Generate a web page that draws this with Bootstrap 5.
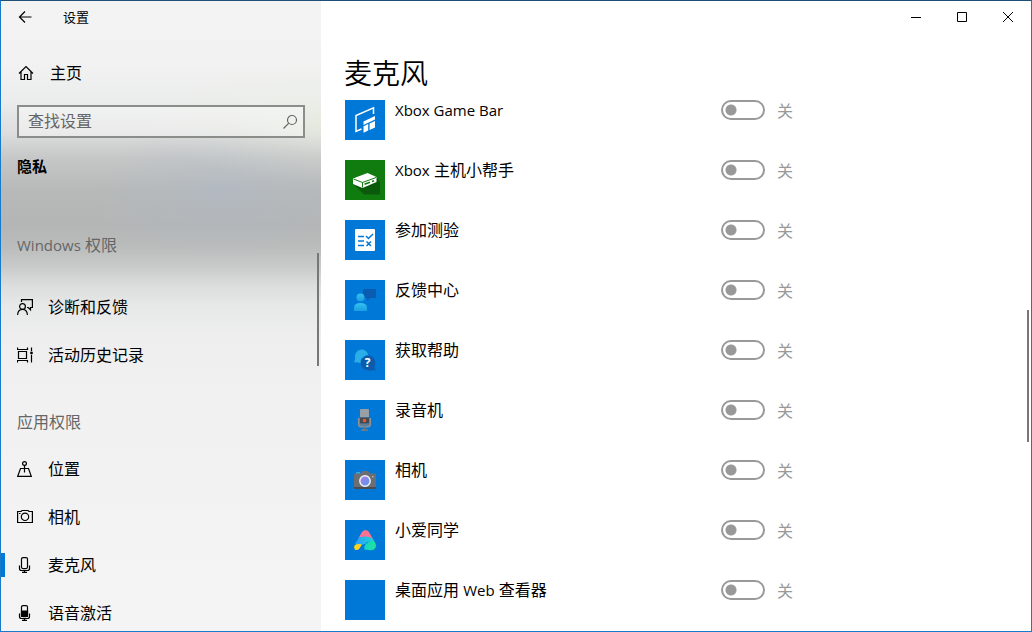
<!DOCTYPE html>
<html lang="zh-CN">
<head>
<meta charset="utf-8">
<meta name="viewport" content="width=device-width, initial-scale=1">
<title>设置</title>
<link href="https://cdn.jsdelivr.net/npm/bootstrap@5.3.0/dist/css/bootstrap.min.css" rel="stylesheet">
<style>
  :root { --accent: #0078d7; }
  body { font-family: "Open Sans", "Noto Sans CJK SC", sans-serif; font-size: 16px; line-height: 24px; color: #000; }
  .win { border: 1px solid #1979ca; border-top-color: #1f4e79; }
  a, a:hover { color: inherit; text-decoration: none; }
  svg { display: block; flex: none; }
  .line-icon { fill: none; stroke: #000; stroke-width: 1.2; }
  .thin { stroke-width: 1; }
  .latin { font-size: 15px; }

  /* Sidebar */
  .side {
    flex: 0 1 320px; min-width: 220px;
    background:
      radial-gradient(ellipse 130px 70px at 220px 190px, rgba(172,184,204,.4), rgba(172,184,204,.15) 55%, rgba(172,184,204,0)),
      radial-gradient(ellipse 180px 60px at 320px 120px, rgba(238,245,224,.45), rgba(238,245,224,.15) 55%, rgba(238,245,224,0)),
      linear-gradient(#f3f3f3 0, #f2f2f2 60px, #ebecec 100px, #dcdddc 132px, #c5c7c6 158px, #b7b9b8 190px, #b4b6b6 225px, #babcbb 245px, #c8caca 265px, #dcdddd 285px, #e7e8e8 305px, #eeeeee 335px, #f1f1f1 400px, #f4f4f4 100%);
  }
  .title-row { height: 32px; font-size: 13px; gap: 14px; }
  .back-btn { width: 48px; height: 32px; padding: 0; border: 0; border-radius: 0; }
  .home-link { height: 48px; margin-top: 16px; padding-left: 17px; gap: 16px; }
  .search-box { margin: 8px 16px 0; height: 33px; border: 2px solid #8b8d8b; background: rgba(255,255,255,.4); }
  .search-box input { border: 0; background: transparent; padding: 0 0 2px 9px; font-size: 16px; line-height: 24px; border-radius: 0; }
  .search-box input::placeholder { color: #666; opacity: 1; }
  .search-box .btn { padding: 0 5px; border: 0; }
  .search-box .line-icon { stroke: #666; }
  .page-name { margin: 16px 16px 0; font-size: 15px; line-height: 24px; font-weight: 700; }
  .group-name { margin: 0 16px; font-size: 16px; line-height: 24px; font-weight: 400; color: #666; }
  .group-a { margin-top: 55px; margin-bottom: 26px; }
  .group-b { margin-top: 31px; margin-bottom: 11px; }
  .side-link { height: 48px; padding: 0 16px; gap: 15px; }
  .side-link.active::before { content: ""; position: absolute; left: 0; top: 12px; width: 4px; height: 24px; background: var(--accent); }
  .thumb { position: absolute; width: 2px; background: #777; }
  .thumb-side { right: 2px; top: 40%; height: 18%; }
  .thumb-main { right: 2px; top: 49%; height: 21%; }

  /* Content */
  .win-btn { width: 46px; height: 32px; padding: 0; border: 0; border-radius: 0; }
  .main-title { margin: 22px 0 9px -1px; font-size: 28px; line-height: 36px; font-weight: 350; }
  .content-pad { padding-left: 24px; }
  .app-row { height: 60px; }
  .app-entry { flex: 0 1 376px; gap: 10px; }
  .app-entry label { line-height: 21px; }
  .tile { width: 40px; height: 40px; background: var(--accent); flex: none; }
  .tile-green { background: #107c10; }
  .toggle.form-check-input {
    width: 44px; height: 20px; margin: 0; flex: none; border: 2px solid #999; border-radius: 10px;
    background: radial-gradient(circle at 8px 8px, #999 5px, transparent 6px) #fff;
  }
  .state { margin-left: 12px; color: #999; line-height: 23px; }
</style>
</head>
<body>
<div class="win d-flex vh-100 overflow-hidden">
  <aside class="side position-relative overflow-hidden">
    <div class="title-row d-flex align-items-center">
      <button class="back-btn btn d-flex align-items-center justify-content-center" type="button" aria-label="返回">
        <svg class="line-icon" width="14" height="14" viewBox="0 0 14 14"><path d="M13.500 7H1.500M7 1.500L1.500 7L7 12.500"/></svg>
      </button>
      <span>设置</span>
    </div>
    <a href="#" class="home-link d-flex align-items-center">
      <svg class="line-icon" width="16" height="16" viewBox="0 0 16 16"><path d="M1 8.500L8 1.500L15 8.500M3 7V14.500H6.500V9.500H9.500V14.500H13V7"/></svg>
      <span>主页</span>
    </a>
    <form class="search-box d-flex align-items-center" role="search">
      <input class="form-control shadow-none" type="text" placeholder="查找设置" aria-label="查找设置">
      <button class="btn" type="button" aria-label="搜索">
        <svg class="line-icon" width="16" height="16" viewBox="0 0 16 16"><circle cx="10" cy="6" r="4.500"/><path d="M6.800 9.200L1.500 14.500"/></svg>
      </button>
    </form>
    <h2 class="page-name">隐私</h2>
    <h3 class="group-name group-a"><span class="latin">Windows</span> 权限</h3>
    <nav>
      <a href="#" class="side-link d-flex align-items-center">
        <svg class="line-icon" width="16" height="16" viewBox="0 0 16 16"><path d="M4.500 3V.6H15.400V8.500H13.500V10.800L11.200 8.500H10"/><circle cx="5.500" cy="7.500" r="2.900"/><path d="M.6 16C.8 12.500 2.800 10.400 5.500 10.400S10.200 12.500 10.400 16"/></svg>
        <span>诊断和反馈</span>
      </a>
      <a href="#" class="side-link d-flex align-items-center">
        <svg class="line-icon" width="16" height="16" viewBox="0 0 16 16"><path d="M.5 .5V2.500H10.500V.5M.5 15.500V13.500H10.500V15.500M1.500 5V11.500H9.500V4.500H1.500ZM14.500 .5V4M14.500 8V15.500"/><circle cx="14.500" cy="6" r="1.400" fill="#000" stroke="none"/></svg>
        <span>活动历史记录</span>
      </a>
    </nav>
    <h3 class="group-name group-b">应用权限</h3>
    <nav>
      <a href="#" class="side-link d-flex align-items-center">
        <svg class="line-icon" width="16" height="16" viewBox="0 0 16 16"><circle cx="7.500" cy="2.500" r="1.900"/><path d="M7.500 4.500V11.500M5.500 7.500H3.500L.7 15.400H14.300L11.500 7.500H9.500M5.500 7.500H9.500"/></svg>
        <span>位置</span>
      </a>
      <a href="#" class="side-link d-flex align-items-center">
        <svg class="line-icon" width="16" height="16" viewBox="0 0 16 16"><path d="M.6 2.500H4L5 1.500H11L12 2.500H15.400V13.500H.6Z"/><circle cx="8" cy="7.800" r="3.700"/><path d="M2 4.500H3.500"/></svg>
        <span>相机</span>
      </a>
      <a href="#" class="side-link active position-relative d-flex align-items-center" aria-current="page">
        <svg class="line-icon" width="16" height="16" viewBox="0 0 16 16"><rect x="4.500" y=".6" width="6" height="11" rx="1.500"/><path d="M2.500 8.500V11.500Q2.500 13.500 4.500 13.500H10.500Q12.500 13.500 12.500 11.500V8.500M7.500 13.500V15.500M5 15.400H10"/></svg>
        <span>麦克风</span>
      </a>
      <a href="#" class="side-link d-flex align-items-center">
        <svg class="line-icon" width="16" height="16" viewBox="0 0 16 16"><rect x="4.500" y=".6" width="6" height="11" rx="1.500"/><path d="M4.500 6H10.500V11.500H4.500Z" fill="#000"/><path d="M2.500 8.500V11.500Q2.500 13.500 4.500 13.500H10.500Q12.500 13.500 12.500 11.500V8.500M7.500 13.500V15.500M5 15.400H10"/></svg>
        <span>语音激活</span>
      </a>
    </nav>
    <div class="thumb thumb-side"></div>
  </aside>

  <main class="flex-grow-1 position-relative overflow-hidden bg-white">
    <div class="d-flex justify-content-end">
      <button class="win-btn btn d-flex align-items-center justify-content-center" type="button" aria-label="最小化">
        <svg class="line-icon thin" width="12" height="12" viewBox="0 0 12 12"><path d="M1 6.500H11"/></svg>
      </button>
      <button class="win-btn btn d-flex align-items-center justify-content-center" type="button" aria-label="最大化">
        <svg class="line-icon thin" width="12" height="12" viewBox="0 0 12 12"><path d="M1.500 1.500H10.500V10.500H1.500Z"/></svg>
      </button>
      <button class="win-btn btn d-flex align-items-center justify-content-center" type="button" aria-label="关闭">
        <svg class="line-icon thin" width="12" height="12" viewBox="0 0 12 12"><path d="M1 1L11 11M11 1L1 11"/></svg>
      </button>
    </div>
    <div class="content-pad">
      <h1 class="main-title">麦克风</h1>
      <div class="app-row d-flex">
        <div class="app-entry d-flex">
          <div class="tile"><svg width="40" height="40" viewBox="0 0 40 40"><path d="M28.500 14V7.800L11 15.600V31.400L16.500 29" fill="none" stroke="#fff" stroke-width="1.500"/><path d="M18.500 21.500L30 16V19.500L18.500 25ZM18.500 26.200L23.200 24V30.500L18.500 32.800ZM24.600 23.400L30 20.900V27.400L24.600 30Z" fill="#fff"/></svg></div>
          <label for="t1"><span class="latin">Xbox Game Bar</span></label>
        </div>
        <input class="toggle form-check-input" type="checkbox" role="switch" id="t1"><span class="state">关</span>
      </div>
      <div class="app-row d-flex">
        <div class="app-entry d-flex">
          <div class="tile tile-green"><svg width="40" height="40" viewBox="0 0 40 40"><path d="M8 24L19 34.500H35V22L31 16Z" fill="#0b5a0b"/><path d="M8 18.500L22.500 13L31.500 17V22L17.500 28L8 24Z" fill="#fff"/><path d="M8.500 19L17.500 22.500L31 17.500M17.500 22.500V27.500" fill="none" stroke="#107c10"/><path d="M19.500 24.300L25 22.200M27 21.500L29 20.700" stroke="#107c10" stroke-width="1.500"/></svg></div>
          <label for="t2"><span class="latin">Xbox</span> 主机小帮手</label>
        </div>
        <input class="toggle form-check-input" type="checkbox" role="switch" id="t2"><span class="state">关</span>
      </div>
      <div class="app-row d-flex">
        <div class="app-entry d-flex">
          <div class="tile"><svg width="40" height="40" viewBox="0 0 40 40"><rect x="10" y="9" width="20" height="22" rx="1" fill="#fff"/><path d="M13 16.500H19M13 21H19M13 25.500H19M21 16L23.500 18.500L28 14M21.500 21.500L26 26M26 21.500L21.500 26" fill="none" stroke="#0078d7" stroke-width="1.500"/></svg></div>
          <label for="t3">参加测验</label>
        </div>
        <input class="toggle form-check-input" type="checkbox" role="switch" id="t3"><span class="state">关</span>
      </div>
      <div class="app-row d-flex">
        <div class="app-entry d-flex">
          <div class="tile"><svg width="40" height="40" viewBox="0 0 40 40"><defs><linearGradient id="fb" x2="0" y2="1"><stop stop-color="#35c1f1"/><stop offset="1" stop-color="#1b9de2"/></linearGradient></defs><path d="M19 9H30Q31 9 31 10V17Q31 18 30 18H25L22 21V18H19Q18 18 18 17V10Q18 9 19 9Z" fill="#0a5cb0"/><circle cx="15.500" cy="17.500" r="4" fill="url(#fb)"/><path d="M9 31V28Q9 23 15.500 23T22 28V31Z" fill="url(#fb)"/></svg></div>
          <label for="t4">反馈中心</label>
        </div>
        <input class="toggle form-check-input" type="checkbox" role="switch" id="t4"><span class="state">关</span>
      </div>
      <div class="app-row d-flex">
        <div class="app-entry d-flex">
          <div class="tile"><svg width="40" height="40" viewBox="0 0 40 40"><path d="M9 22.500L10.300 18.500A6.700 6.700 0 1 1 16 23Q13 23 12.200 22.200Z" fill="#2aaee9"/><path d="M31 30.500L28.500 30Q25.500 31 22 30A7.400 7.400 0 1 1 30 25L29.500 27.500Z" fill="#0d5cab"/><text x="22.500" y="27" font-family="Open Sans, sans-serif" font-size="12" font-weight="700" fill="#fff" text-anchor="middle">?</text></svg></div>
          <label for="t5">获取帮助</label>
        </div>
        <input class="toggle form-check-input" type="checkbox" role="switch" id="t5"><span class="state">关</span>
      </div>
      <div class="app-row d-flex">
        <div class="app-entry d-flex">
          <div class="tile"><svg width="40" height="40" viewBox="0 0 40 40"><rect x="15" y="9" width="9" height="8.500" rx="1" fill="#9a9fa6"/><rect x="15" y="17.500" width="9" height="6" fill="#444b54"/><circle cx="19.500" cy="20.500" r="1.800" fill="#f2592a"/><path d="M13.800 18V24.500Q13.800 26.500 16 26.500H23Q25.200 26.500 25.200 24.500V18" fill="none" stroke="#8a8f96" stroke-width="1.800"/><rect x="15" y="23.500" width="9" height="1.500" fill="#747a82"/><path d="M19.500 26V30M16 30.200H23" stroke="#747a82" stroke-width="1.800"/></svg></div>
          <label for="t6">录音机</label>
        </div>
        <input class="toggle form-check-input" type="checkbox" role="switch" id="t6"><span class="state">关</span>
      </div>
      <div class="app-row d-flex">
        <div class="app-entry d-flex">
          <div class="tile"><svg width="40" height="40" viewBox="0 0 40 40"><defs><linearGradient id="lens" x2="1" y2="1"><stop stop-color="#b67be0"/><stop offset="1" stop-color="#4f9af0"/></linearGradient></defs><rect x="11" y="12" width="4" height="2" fill="#35a9e8"/><path d="M10 13.500H15L17.500 11H23L25.500 13.500H30Q31 13.500 31 14.500V28Q31 29 30 29H10Q9 29 9 28V14.500Q9 13.500 10 13.500Z" fill="#6b6f74"/><path d="M9 27H31V28Q31 29 30 29H10Q9 29 9 28Z" fill="#4a4e52"/><circle cx="20" cy="21" r="5.200" fill="url(#lens)" stroke="#f2f2f7" stroke-width="1.500"/><circle cx="27.800" cy="16.700" r=".8" fill="#ccc"/></svg></div>
          <label for="t7">相机</label>
        </div>
        <input class="toggle form-check-input" type="checkbox" role="switch" id="t7"><span class="state">关</span>
      </div>
      <div class="app-row d-flex">
        <div class="app-entry d-flex">
          <div class="tile"><svg width="40" height="40" viewBox="0 0 40 40"><defs><linearGradient id="xa" x2="1"><stop stop-color="#2f9bff"/><stop offset="1" stop-color="#16d9cf"/></linearGradient><linearGradient id="xg" x2="1"><stop stop-color="#19d3c5"/><stop offset="1" stop-color="#1fe39a"/></linearGradient></defs><path d="M13.500 18L17 12Q20.500 8 24 12L28 19Q21 16 13.500 18Z" fill="#fb7190"/><path d="M10 24L14 17.500Q22 15 28 19L30.500 23.500Q24 20 20 24Q15 25.500 10 24Z" fill="url(#xa)"/><path d="M19.500 29.500Q18.500 26 21.500 23.500Q25 20.500 29.500 22Q32.500 26 29.500 29Q27 31 23.500 30Z" fill="url(#xg)"/><path d="M9.500 25.500Q11 23.500 17 24.200L14.500 28.500Q12.500 31 10 29.500Q8.500 28 9.500 25.500Z" fill="#ffd21e"/></svg></div>
          <label for="t8">小爱同学</label>
        </div>
        <input class="toggle form-check-input" type="checkbox" role="switch" id="t8"><span class="state">关</span>
      </div>
      <div class="app-row d-flex">
        <div class="app-entry d-flex">
          <div class="tile"></div>
          <label for="t9">桌面应用 <span class="latin">Web</span> 查看器</label>
        </div>
        <input class="toggle form-check-input" type="checkbox" role="switch" id="t9"><span class="state">关</span>
      </div>
    </div>
    <div class="thumb thumb-main"></div>
  </main>
</div>
<script src="https://cdn.jsdelivr.net/npm/bootstrap@5.3.0/dist/js/bootstrap.bundle.min.js"></script>
</body>
</html>
